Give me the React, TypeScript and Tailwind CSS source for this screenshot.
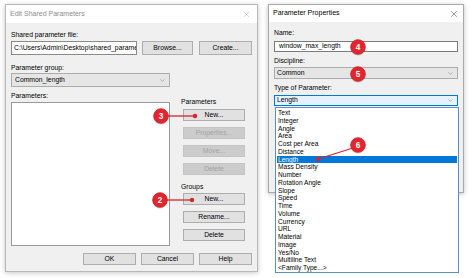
import React from "react";
import { X, ChevronDown } from "lucide-react";

const font = { fontFamily: '"Liberation Sans", Arial, sans-serif' };

function Btn({ children, w, disabled }: { children: React.ReactNode; w: string; disabled?: boolean }) {
  return (
    <div
      className={`${w} h-[12px] flex items-center justify-center border text-[6.8px] leading-none ${
        disabled ? "bg-[#cccccc] border-[#c4c4c4] text-[#a3a3a3]" : "bg-[#e1e1e1] border-[#adadad] text-black"
      }`}
    >
      {children}
    </div>
  );
}

function Label({ children, cls }: { children: React.ReactNode; cls: string }) {
  return <div className={`text-[6.8px] leading-[10px] text-black ${cls}`}>{children}</div>;
}

const types = [
  "Text",
  "Integer",
  "Angle",
  "Area",
  "Cost per Area",
  "Distance",
  "Length",
  "Mass Density",
  "Number",
  "Rotation Angle",
  "Slope",
  "Speed",
  "Time",
  "Volume",
  "Currency",
  "URL",
  "Material",
  "Image",
  "Yes/No",
  "Multiline Text",
  "<Family Type...>",
];

function Marker({ cx, cy, n }: { cx: number; cy: number; n: string }) {
  return (
    <g>
      <circle cx={cx} cy={cy + 0.8} r={7.6} fill="rgba(0,0,0,0.18)" />
      <circle cx={cx} cy={cy} r={7.3} fill="#e3262e" stroke="#c81d24" strokeWidth={0.8} />
      <text
        x={cx}
        y={cy + 2.9}
        textAnchor="middle"
        fontSize="8.2"
        fontWeight="bold"
        fill="#fff"
        fontFamily='"Liberation Sans", Arial, sans-serif'
      >
        {n}
      </text>
    </g>
  );
}

export default function App() {
  return (
    <div className="relative w-[474px] h-[278px] bg-white overflow-hidden" style={font}>
      <div className="flex items-start pt-[4px] pl-[5px] gap-[10px]">
        {/* Left dialog */}
        <div className="w-[253px] h-[268px] border border-[#b8b8b8] bg-[#f0f0f0] shadow-[0_1px_5px_rgba(0,0,0,0.22)] flex flex-col">
          <div className="h-[18px] bg-white flex items-center justify-between pl-[4px] pr-[6px]">
            <span className="text-[7px] text-[#8c8c8c]">Edit Shared Parameters</span>
            <X size={9} strokeWidth={1} color="#9a9a9a" />
          </div>
          <div className="px-[5px] flex flex-col">
            <Label cls="mt-[7px]">Shared parameter file:</Label>
            <div className="mt-[1px] flex items-center">
              <div className="w-[126px] h-[14px] bg-white border border-[#8a8a8a] flex items-center pl-[2px] overflow-hidden whitespace-nowrap text-[6.8px] leading-none">
                C:\Users\Admin\Desktop\shared_parame
              </div>
              <div className="ml-[5px]">
                <div className="w-[51px] h-[14px] flex items-center justify-center border border-[#adadad] bg-[#e1e1e1] text-[6.8px]">
                  Browse...
                </div>
              </div>
              <div className="ml-[6px]">
                <div className="w-[53px] h-[14px] flex items-center justify-center border border-[#adadad] bg-[#e1e1e1] text-[6.8px]">
                  Create...
                </div>
              </div>
            </div>
            <Label cls="mt-[8px]">Parameter group:</Label>
            <div className="w-[159px] h-[14px] bg-[#e5e5e5] border border-[#acacac] flex items-center justify-between pl-[3px] pr-[3px] text-[6.8px]">
              <span>Common_length</span>
              <ChevronDown size={7} strokeWidth={1.3} color="#555" />
            </div>
            <Label cls="mt-[4px]">Parameters:</Label>
            <div className="flex items-start">
              <div className="mt-[1px] w-[159px] h-[144px] bg-white border border-[#9a9a9a]" />
              <div className="ml-[11px] mt-[-4px] flex flex-col">
                <div className="text-[6.8px] leading-[10px]">Parameters</div>
                <div className="ml-[2px] mt-[2px] flex flex-col gap-[6px]">
                  <Btn w="w-[62px]">New...</Btn>
                  <Btn w="w-[62px]" disabled>
                    Properties...
                  </Btn>
                  <Btn w="w-[62px]" disabled>
                    Move...
                  </Btn>
                  <Btn w="w-[62px]" disabled>
                    Delete
                  </Btn>
                </div>
                <div className="mt-[7px] text-[6.8px] leading-[10px]">Groups</div>
                <div className="ml-[2px] mt-[1px] flex flex-col gap-[6px]">
                  <Btn w="w-[62px]">New...</Btn>
                  <Btn w="w-[62px]">Rename...</Btn>
                  <Btn w="w-[62px]">Delete</Btn>
                </div>
              </div>
            </div>
            <div className="mt-[7px] flex justify-end gap-[5px]">
              <Btn w="w-[53px]">OK</Btn>
              <Btn w="w-[53px]">Cancel</Btn>
              <Btn w="w-[53px]">Help</Btn>
            </div>
          </div>
        </div>

        {/* Right dialog */}
        <div className="relative w-[196px] h-[189px] border border-[#a8a8a8] bg-[#f0f0f0] shadow-[0_1px_5px_rgba(0,0,0,0.25)] flex flex-col">
          <div className="h-[17px] bg-white flex items-center justify-between pl-[4px] pr-[4px]">
            <span className="text-[7px] text-black">Parameter Properties</span>
            <X size={10} strokeWidth={1.1} color="#222" />
          </div>
          <div className="px-[5px] flex flex-col">
            <Label cls="mt-[6px]">Name:</Label>
            <div className="mt-[3px] h-[11px] bg-white border border-[#7a7a7a] flex items-center pl-[4px] text-[6.8px]">
              window_max_length
            </div>
            <Label cls="mt-[4px]">Discipline:</Label>
            <div className="mt-[1px] h-[12px] bg-[#e5e5e5] border border-[#acacac] flex items-center justify-between pl-[2px] pr-[3px] text-[6.8px]">
              <span>Common</span>
              <ChevronDown size={7} strokeWidth={1.3} color="#555" />
            </div>
            <Label cls="mt-[4px]">Type of Parameter:</Label>
            <div className="mt-[2px] h-[11px] bg-[#e5f1fb] border border-[#0078d7] flex items-center justify-between pl-[2px] pr-[3px] text-[6.8px]">
              <span>Length</span>
              <ChevronDown size={7} strokeWidth={1.3} color="#555" />
            </div>
          </div>
          {/* dropdown list (popup) */}
          <div className="absolute left-[6px] top-[102px] w-[184px] h-[166px] bg-white border border-[#5a8ec4] pt-[1px] px-[1px] z-10">
            {types.map((t) => (
              <div
                key={t}
                className={`h-[7.75px] leading-[7.75px] text-[6.6px] pl-[1px] whitespace-nowrap ${
                  t === "Length" ? "bg-[#0078d7] text-white" : "text-black"
                }`}
              >
                {t}
              </div>
            ))}
          </div>
        </div>
      </div>

      {/* annotation markers */}
      <svg className="absolute left-0 top-0 pointer-events-none z-20" width={474} height={278} viewBox="0 0 474 278">
        <line x1={166} y1={116} x2={195} y2={116} stroke="#d9232b" strokeWidth={1.3} />
        <circle cx={195} cy={116} r={2.2} fill="#d9232b" />
        <Marker cx={161} cy={116} n="3" />
        <line x1={165} y1={200} x2={192} y2={200} stroke="#d9232b" strokeWidth={1.3} />
        <circle cx={192} cy={200} r={2.2} fill="#d9232b" />
        <Marker cx={160} cy={200} n="2" />
        <Marker cx={358} cy={47} n="4" />
        <Marker cx={358} cy={74} n="5" />
        <line x1={353} y1={148} x2={318} y2={159} stroke="#d9232b" strokeWidth={1.3} />
        <circle cx={318} cy={159} r={2.2} fill="#d9232b" />
        <Marker cx={358} cy={145} n="6" />
      </svg>
    </div>
  );
}
